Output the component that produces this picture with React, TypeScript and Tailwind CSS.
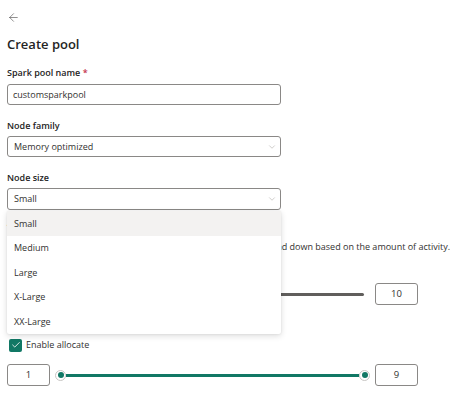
import React from 'react';
import { ArrowLeft, ChevronDown, Check } from 'lucide-react';

const FONT = { fontFamily: '"Segoe UI", "Open Sans", sans-serif' };

// Small numeric box used at both ends of a slider
const NumberBox: React.FC<{ value: string }> = ({ value }) => (
  <div className="w-[43px] h-[22px] shrink-0 border border-[#8a8886] rounded-[3px] flex items-center justify-center text-[9.5px] text-[#323130] bg-white">
    {value}
  </div>
);

const Thumb: React.FC = () => (
  <div className="w-[11px] h-[11px] rounded-full bg-white border border-[#c8c6c4] flex items-center justify-center shrink-0">
    <div className="w-[6px] h-[6px] rounded-full bg-[#117865]" />
  </div>
);

const SelectBox: React.FC<{ value: string; className?: string }> = ({ value, className }) => (
  <div
    className={`w-[274px] border border-[#8a8886] rounded-[3px] flex items-center justify-between pl-[6px] pr-[3px] text-[9px] text-[#323130] bg-white ${className ?? ''}`}
  >
    <span>{value}</span>
    <ChevronDown className="w-[10px] h-[10px] text-[#b3b0ad]" strokeWidth={1.5} />
  </div>
);

const SIZES = ['Small', 'Medium', 'Large', 'X-Large', 'XX-Large'];

export default function App() {
  return (
    <div className="w-[474px] h-[417px] bg-white overflow-hidden px-[7px] text-[#242424]" style={FONT}>
      {/* Back */}
      <div className="mt-[11px] h-[12px] flex items-center">
        <ArrowLeft className="w-[13px] h-[13px] text-[#323130]" strokeWidth={1} />
      </div>

      <h1 className="mt-[12px] leading-[18px] text-[13px] font-semibold">Create pool</h1>

      <div className="mt-[13px] leading-[14px] text-[9px] font-semibold">
        Spark pool name <span className="text-[#c4314b]">*</span>
      </div>
      <div className="mt-[4px] w-[274px] h-[21px] border border-[#8a8886] rounded-[3px] flex items-center pl-[5px] text-[9px] text-[#323130]">
        customsparkpool
      </div>

      <div className="mt-[14px] leading-[14px] text-[9px] font-semibold">Node family</div>
      <SelectBox value="Memory optimized" className="mt-[3px] h-[21px]" />

      <div className="mt-[14px] leading-[14px] text-[9px] font-semibold">Node size</div>
      <div className="relative mt-[3px] z-10">
        <SelectBox value="Small" className="h-[22px]" />
        {/* Open dropdown list */}
        <div className="absolute left-0 top-[23px] w-[274px] bg-white shadow-[0_2px_6px_rgba(0,0,0,0.14),0_0_2px_rgba(0,0,0,0.1)] rounded-[2px]">
          {SIZES.map((s, i) => (
            <div
              key={s}
              className={`h-[24.5px] flex items-center pl-[7px] text-[9px] text-[#323130] ${
                i === 0 ? 'bg-[#f3f2f1]' : ''
              }`}
            >
              {s}
            </div>
          ))}
        </div>
      </div>

      {/* Content partly covered by the dropdown */}
      <div className="mt-[6px] leading-[14px] text-[9px] font-semibold">Autoscale</div>
      <p className="mt-[10px] leading-[14px] text-[9px] text-[#323130] whitespace-nowrap">
        If enabled, your Apache Spark pools will automatically scale up and down based on the amount of activity.
      </p>

      <div className="mt-[29px] w-[411px] h-[22px] flex items-center">
        <NumberBox value="3" />
        <div className="flex-1 flex items-center pl-[5px] pr-[11px]">
          <div className="flex-1 h-[3px] bg-[#605e5c] rounded-full" />
        </div>
        <NumberBox value="10" />
      </div>

      <div className="mt-[9px] leading-[14px] text-[9px] font-semibold">Dynamically allocate executors</div>

      <label className="mt-[10px] h-[14px] flex items-center gap-[4px] pl-[2px] text-[9px] text-[#323130]">
        <span className="w-[13px] h-[13px] rounded-[2px] bg-[#117865] flex items-center justify-center">
          <Check className="w-[10px] h-[10px] text-white" strokeWidth={2} />
        </span>
        Enable allocate
      </label>

      <div className="mt-[12px] w-[411px] h-[22px] flex items-center">
        <NumberBox value="1" />
        <div className="flex-1 flex items-center pl-[5px] pr-[5px]">
          <Thumb />
          <div className="flex-1 h-[3px] bg-[#117865]" />
          <Thumb />
        </div>
        <NumberBox value="9" />
      </div>
    </div>
  );
}
